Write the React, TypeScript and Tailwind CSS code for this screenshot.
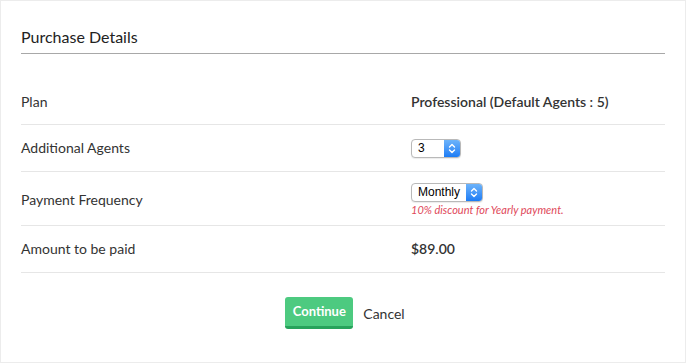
import React from "react";

const Chevrons = () => (
  <svg width="8" height="11" viewBox="0 0 8 11" fill="none">
    <path d="M1.5 4 L4 1.5 L6.5 4" stroke="white" strokeWidth="1.4" strokeLinecap="round" strokeLinejoin="round" />
    <path d="M1.5 7 L4 9.5 L6.5 7" stroke="white" strokeWidth="1.4" strokeLinecap="round" strokeLinejoin="round" />
  </svg>
);

const MacSelect = ({ value, width }: { value: string; width: string }) => (
  <div
    className={`flex h-[19px] ${width} items-stretch overflow-hidden rounded-[4px] border border-[#b9b9b9] bg-white shadow-[0_1px_1px_rgba(0,0,0,0.08)]`}
    style={{ fontFamily: '"Liberation Sans", Arial, sans-serif' }}
  >
    <span className="flex-1 pl-[6px] text-[12px] leading-[17px] text-black">{value}</span>
    <span className="flex w-[16px] items-center justify-center bg-gradient-to-b from-[#6cb3fa] to-[#1a7cf5]">
      <Chevrons />
    </span>
  </div>
);

export default function App() {
  return (
    <div
      className="h-[363px] w-[686px] border border-[#ececec] bg-white px-[20px] text-[#333]"
      style={{ fontFamily: 'Lato, "Open Sans", sans-serif' }}
    >
      <div className="border-b border-[#a8a8a8] pt-[24px] pb-[4px]">
        <h2 className="text-[16px] leading-6 text-[#222]">Purchase Details</h2>
      </div>

      <div className="mt-[25px] text-[14px]">
        <div className="grid grid-cols-[390px_1fr] border-b border-[#e6e6e6] pt-[13px] pb-[12px] leading-5">
          <div>Plan</div>
          <div className="font-semibold">Professional (Default Agents : 5)</div>
        </div>
        <div className="grid grid-cols-[390px_1fr] items-center border-b border-[#e6e6e6] py-[13px] leading-5">
          <div>Additional Agents</div>
          <MacSelect value="3" width="w-[50px]" />
        </div>
        <div className="grid grid-cols-[390px_1fr] items-center border-b border-[#e6e6e6] pt-[11px] pb-[9px] leading-5">
          <div>Payment Frequency</div>
          <div>
            <MacSelect value="Monthly" width="w-[72px]" />
            <div className="mt-[1px] text-[11px] leading-[13px] text-[#e0485a] italic">
              10% discount for Yearly payment.
            </div>
          </div>
        </div>
        <div className="grid grid-cols-[390px_1fr] border-b border-[#e6e6e6] py-[13px] leading-5">
          <div>Amount to be paid</div>
          <div className="font-semibold">$89.00</div>
        </div>
      </div>

      <div className="mt-[24px] flex items-center justify-center gap-[10px] pl-[4px]">
        <button className="h-[32px] w-[68px] rounded-[3px] border-b-[3px] border-[#27a35b] bg-[#4dca80] text-[13px] font-bold text-white">
          Continue
        </button>
        <button className="text-[14px] text-[#333]">Cancel</button>
      </div>
    </div>
  );
}
